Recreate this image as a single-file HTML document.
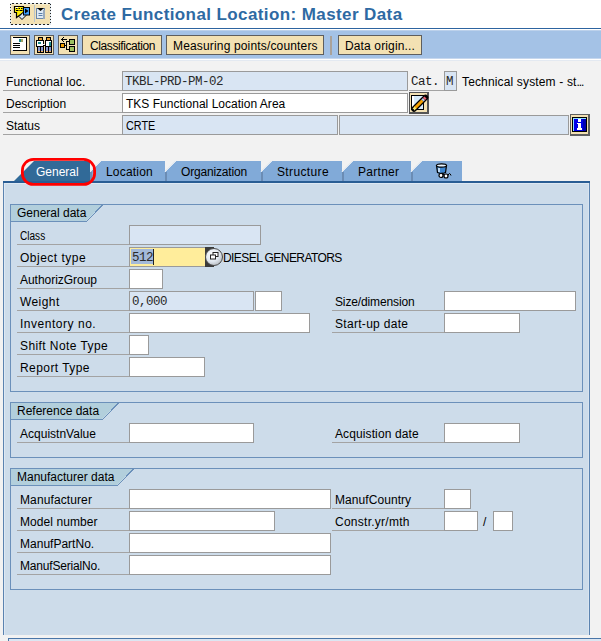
<!DOCTYPE html>
<html><head><meta charset="utf-8">
<style>
*{margin:0;padding:0;box-sizing:border-box}
html,body{width:601px;height:641px;overflow:hidden;background:#f2f2f2;font-family:"Liberation Sans",sans-serif;font-size:12px;color:#000}
.a{position:absolute}
.btn{position:absolute;top:35px;height:20px;background:#f3e1b3;border:1px solid #5e5e5e;white-space:nowrap;line-height:21px;padding-left:6px}
.ibtn{position:absolute;top:35px;width:21px;height:20px;background:#f3e1b3;border:1px solid #5e5e5e}
.lbl{position:absolute;height:20px;border-bottom:1px solid #a3a3a3;white-space:nowrap;line-height:22px;padding-left:3px}
.fld{position:absolute;height:20px;border:1px solid #9a9a9a;background:#fff;white-space:nowrap;line-height:20px;padding-left:3px;overflow:hidden}
.ro{background:#d9e5f3}
.mono{font-family:"Liberation Mono",monospace;font-size:12.5px;letter-spacing:-0.5px;color:#2a2a2a}
.txt{position:absolute;white-space:nowrap;line-height:22px;height:20px}
</style></head><body>
<div class="a" style="left:0px;top:0px;width:601px;height:28px;background:#fff;"></div>
<svg class="a" style="left:10px;top:3px" width="41" height="22" viewBox="0 0 41 22">
 <rect x="0" y="0" width="41" height="22" fill="#dde8f0"/>
 <rect x="1" y="1" width="39" height="20" fill="#f3e1b3"/>
 <rect x="1" y="1" width="39" height="1" fill="#f8ecc8"/><rect x="1" y="1" width="1" height="20" fill="#f8ecc8"/>
 <path d="M2 0.5H41" stroke="#222" stroke-dasharray="2 2" shape-rendering="crispEdges"/>
 <path d="M1 21.5H41" stroke="#222" stroke-dasharray="2 2" shape-rendering="crispEdges"/>
 <path d="M0.5 1V22" stroke="#222" stroke-dasharray="1 2" shape-rendering="crispEdges"/>
 <path d="M40.5 1V22" stroke="#222" stroke-dasharray="1 2" shape-rendering="crispEdges"/>
 <g shape-rendering="crispEdges">
 <rect x="24" y="2" width="1" height="17" fill="#b8c4cf"/>
 </g>
 <path d="M4.5 3.5 H13.5 V9.5 L6.5 14.5 V9.5 H4.5 Z" fill="#ffee00" stroke="#000" stroke-width="1.2"/>
 <path d="M5.5 4.5 H8" stroke="#fff" stroke-width="1"/>
 <path d="M6 5.5 H7.5 M8.5 5.5 H10 M11 5.5 H12.5 M6 7.5 H8.5 M9.5 7.5 H12.5" stroke="#000" stroke-width="1.1"/>
 <path d="M9 13.5 L13 9.5 L16 12.5 L12 16.5 Z" fill="#d8e8f8" stroke="#000" stroke-width="1"/>
 <rect x="13.5" y="4.5" width="6" height="7.5" fill="#40a0ff" stroke="#000" stroke-width="1"/>
 <path d="M15 5.5 L18.5 8 L15 10.5 Z" fill="#000"/>
 <rect x="26.5" y="5.5" width="8" height="10" fill="#dfeaf5" stroke="#6d88a8"/>
 <path d="M27 5 H34 L30.5 8 Z" fill="#000"/>
 <path d="M28.5 10.5 H32.5 M28.5 12.5 H32.5" stroke="#5c80aa"/>
 <rect x="33" y="7" width="2" height="9" fill="#9aaabb"/>
</svg>
<div class="a" style="left:61px;top:5px;font-weight:bold;font-size:17px;color:#2e6aa3;white-space:nowrap;letter-spacing:0.4px">Create Functional Location: Master Data</div>
<div class="a" style="left:0px;top:28px;width:601px;height:1px;background:#2d64a0;"></div>
<div class="a" style="left:0px;top:29px;width:601px;height:1px;background:#fff;"></div>
<div class="a" style="left:0px;top:30px;width:601px;height:28px;background:#a4c2e6;"></div>
<div class="a" style="left:0px;top:30px;width:601px;height:1px;background:#bcd1eb;"></div>
<div class="a" style="left:0px;top:58px;width:601px;height:1px;background:#c6d7ee;"></div>
<div class="a" style="left:0px;top:59px;width:601px;height:1px;background:#fff;"></div>
<div class="a" style="left:0px;top:60px;width:601px;height:1px;background:#e3e9f1;"></div>
<div class="ibtn" style="left:10px;width:20px"></div>
<div class="ibtn" style="left:34px;width:20px"></div>
<div class="ibtn" style="left:58px;width:20px"></div>
<svg class="a" style="left:10px;top:35px" width="20" height="20" viewBox="0 0 20 20" shape-rendering="crispEdges">
 <rect x="2" y="2" width="15" height="14" fill="#fff"/>
 <rect x="2" y="15" width="15" height="1" fill="#c8cfee"/>
 <rect x="3" y="2" width="14" height="1" fill="#000"/>
 <rect x="16" y="2" width="1" height="14" fill="#000"/>
 <rect x="3" y="15" width="14" height="1" fill="#000"/>
 <rect x="9" y="4" width="2" height="3" fill="#1a8a8a"/>
 <rect x="11" y="4" width="2" height="3" fill="#a0a060"/>
 <rect x="3" y="8" width="7" height="1" fill="#000"/>
 <rect x="3" y="10" width="7" height="1" fill="#000"/>
 <rect x="3" y="12" width="7" height="1" fill="#000"/>
</svg>
<svg class="a" style="left:34px;top:35px" width="20" height="20" viewBox="0 0 20 20">
 <g shape-rendering="crispEdges">
 <rect x="4" y="2" width="5" height="4" fill="#000"/><rect x="5" y="3" width="3" height="3" fill="#e8a030"/>
 <rect x="2" y="5" width="8" height="7" fill="#000"/><rect x="3" y="6" width="6" height="5" fill="#fff"/><rect x="4" y="7" width="3" height="2" fill="#1a8a8a"/>
 <rect x="9" y="9" width="3" height="1" fill="#fff"/><rect x="9" y="10" width="2" height="1" fill="#000"/>
 <rect x="3" y="11" width="7" height="7" fill="#000"/><rect x="4" y="12" width="2" height="5" fill="#8a98d0"/><rect x="7" y="12" width="2" height="5" fill="#8a98d0"/>
 <rect x="4" y="16" width="2" height="1" fill="#f0b060"/><rect x="7" y="16" width="2" height="1" fill="#f0b060"/>

 <rect x="12" y="2" width="5" height="4" fill="#000"/><rect x="13" y="3" width="3" height="3" fill="#e8a030"/>
 <rect x="11" y="5" width="7" height="7" fill="#000"/><rect x="12" y="6" width="5" height="5" fill="#fff"/><rect x="15" y="7" width="2" height="4" fill="#1a8a8a"/>
 <rect x="11" y="11" width="7" height="7" fill="#000"/><rect x="12" y="12" width="2" height="5" fill="#8a98d0"/><rect x="15" y="12" width="2" height="5" fill="#8a98d0"/>
 <rect x="12" y="16" width="2" height="1" fill="#f0b060"/><rect x="15" y="16" width="2" height="1" fill="#f0b060"/>
 </g>
</svg>
<svg class="a" style="left:58px;top:35px" width="20" height="20" viewBox="0 0 20 20" shape-rendering="crispEdges">
 <rect x="3" y="4" width="6" height="1" fill="#000"/>
 <rect x="4" y="3" width="1" height="1" fill="#000"/><rect x="4" y="5" width="1" height="1" fill="#000"/><rect x="5" y="2" width="1" height="1" fill="#000"/><rect x="5" y="6" width="1" height="1" fill="#000"/>
 <rect x="2" y="8" width="5" height="5" fill="#000"/><rect x="3" y="9" width="3" height="3" fill="#f5a000"/>
 <rect x="7" y="10" width="2" height="1" fill="#000"/>
 <rect x="8" y="6" width="1" height="9" fill="#000"/>
 <rect x="8" y="6" width="3" height="1" fill="#000"/><rect x="8" y="14" width="3" height="1" fill="#000"/>
 <rect x="11" y="4" width="6" height="6" fill="#000"/><rect x="12" y="5" width="4" height="4" fill="#9cc060"/>
 <rect x="11" y="11" width="6" height="6" fill="#000"/><rect x="12" y="12" width="4" height="4" fill="#9cc060"/>
</svg>
<div class="btn" style="left:82px;width:80px;padding-left:7px"><span style="letter-spacing:-0.406px">Classification</span></div>
<div class="btn" style="left:166px;width:158px"><span style="letter-spacing:0.159px">Measuring points/counters</span></div>
<div class="a" style="left:330px;top:36px;width:2px;height:19px;background:#aaa29a;"></div>
<div class="btn" style="left:338px;width:84px"><span style="letter-spacing:0.135px">Data origin...</span></div>
<div class="lbl" style="left:3px;top:71px;width:119px;"><span style="letter-spacing:0.133px">Functional loc.</span></div>
<div class="fld ro mono" style="left:122px;top:71px;width:286px;padding-left:2px">TKBL-PRD-PM-02</div>
<div class="lbl" style="left:409px;top:71px;width:35px;font-family:Liberation Mono;font-size:12.5px;letter-spacing:-0.5px;padding-left:2px;color:#1a1a1a">Cat.</div>
<div class="fld ro mono" style="left:444px;top:71px;width:13px;padding-left:1px">M</div>
<div class="txt" style="left:462px;top:71px;letter-spacing:0.15px">Technical system - st<span style="letter-spacing:-1.1px">...</span></div>
<div class="lbl" style="left:3px;top:93px;width:119px;"><span style="letter-spacing:0.01px">Description</span></div>
<div class="fld " style="left:122px;top:93px;width:286px;"><span style="letter-spacing:0.018px">TKS Functional Location Area</span></div>
<div class="a" style="left:409px;top:92px;width:20px;height:22px;background:#f3e1b3;border:1px solid #555;border-right-width:2px;border-bottom-width:2px"></div>
<svg class="a" style="left:409px;top:92px" width="20" height="22" viewBox="0 0 20 22">
 <g shape-rendering="crispEdges"><rect x="2" y="3" width="13" height="15" fill="#000"/><rect x="3" y="4" width="11" height="13" fill="#d6eaf8"/><rect x="3" y="4" width="2" height="13" fill="#fff"/></g>
 <path d="M5 17 L16.5 5.5" stroke="#000" stroke-width="5.5" stroke-linecap="round"/>
 <path d="M6 16 L13.5 8.5" stroke="#f5a000" stroke-width="3"/>
 <path d="M13.5 8.5 L15 7" stroke="#b8c8e8" stroke-width="3"/>
 <path d="M15 7 L16.5 5.5" stroke="#e86070" stroke-width="3"/>
 <path d="M4.5 17.5 L6.5 15.5" stroke="#f8e870" stroke-width="2.5"/>
 <path d="M3.8 18.2 L4.6 17.4" stroke="#000" stroke-width="1.5"/>
</svg>
<div class="lbl" style="left:3px;top:115px;width:119px;"><span style="letter-spacing:-0.02px">Status</span></div>
<div class="fld ro" style="left:122px;top:115px;width:216px;"><span style="display:inline-block;transform:scaleX(0.9);transform-origin:0 0">CRTE</span></div>
<div class="fld ro" style="left:339px;top:115px;width:230px;"></div>
<div class="a" style="left:570px;top:114px;width:20px;height:22px;background:#f3e1b3;border:1px solid #606060;border-right-width:2px;border-bottom-width:2px"></div>
<svg class="a" style="left:570px;top:114px" width="20" height="22" viewBox="0 0 20 22" shape-rendering="crispEdges">
 <rect x="2" y="3" width="15" height="15" fill="#000"/><rect x="3" y="4" width="13" height="13" fill="#0000e8"/>
 <rect x="3" y="4" width="13" height="1" fill="#90e0ff"/><rect x="3" y="4" width="1" height="13" fill="#90e0ff"/>
 <rect x="13" y="5" width="3" height="12" fill="#0000b0"/>
 <rect x="8" y="5" width="3" height="3" fill="#fff"/>
 <rect x="7" y="9" width="4" height="1" fill="#fff"/><rect x="8" y="9" width="3" height="6" fill="#fff"/><rect x="7" y="14" width="5" height="2" fill="#fff"/>
</svg>
<div class="a" style="left:3px;top:181px;width:587px;height:454px;background:#cddcea;border-left:1px solid #5b83b0;border-right:1px solid #5b83b0;border-top:2px solid #295d94"></div>
<div class="a" style="left:4px;top:183px;width:1px;height:452px;background:#dde8f3;"></div>
<div class="a" style="left:588px;top:183px;width:1px;height:452px;background:#d8e4f0;"></div>
<svg class="a" style="left:0;top:155px" width="601" height="34" viewBox="0 155 601 34">
<polygon points="401.5,181 421.5,161 462,161 462,181" fill="#81aad8"/>
<polygon points="332.5,181 352.5,161 411,161 411,181" fill="#81aad8"/>
<polygon points="251.5,181 271.5,161 342,161 342,181" fill="#81aad8"/>
<polygon points="155.5,181 175.5,161 261,161 261,181" fill="#81aad8"/>
<polygon points="80.5,181 100.5,161 165,161 165,181" fill="#81aad8"/>
<path d="M89.8,172 L100.8,161" stroke="#f8f8f8" stroke-width="1"/>
<rect x="90" y="172" width="2" height="9" fill="#6b8cb4"/>
<path d="M164.8,172 L175.8,161" stroke="#f8f8f8" stroke-width="1"/>
<rect x="165" y="172" width="2" height="9" fill="#6b8cb4"/>
<path d="M260.8,172 L271.8,161" stroke="#f8f8f8" stroke-width="1"/>
<rect x="261" y="172" width="2" height="9" fill="#6b8cb4"/>
<path d="M341.8,172 L352.8,161" stroke="#f8f8f8" stroke-width="1"/>
<rect x="342" y="172" width="2" height="9" fill="#6b8cb4"/>
<path d="M410.8,172 L421.8,161" stroke="#f8f8f8" stroke-width="1"/>
<rect x="411" y="172" width="2" height="9" fill="#6b8cb4"/>
<polygon points="14,181 34,161 90,161 90,181" fill="#316a98"/>
<rect x="3" y="181" width="587" height="2" fill="#295d94"/>
<rect x="4" y="183" width="585" height="1" fill="#dde8f3"/>
<rect x="22.4" y="159.4" width="72.2" height="25" rx="11" ry="11" fill="none" stroke="#ff0000" stroke-width="2.8"/>
</svg>
<div class="txt" style="left:36px;top:161px;color:#fff">General</div>
<div class="txt" style="left:106px;top:161px;"><span style="letter-spacing:0.186px">Location</span></div>
<div class="txt" style="left:181px;top:161px;"><span style="letter-spacing:-0.177px">Organization</span></div>
<div class="txt" style="left:277px;top:161px;"><span style="letter-spacing:0.362px">Structure</span></div>
<div class="txt" style="left:358px;top:161px;"><span style="letter-spacing:0.284px">Partner</span></div>
<svg class="a" style="left:435px;top:163px" width="18" height="16" viewBox="0 0 18 16">
 <path d="M1.5 2.5 L2.5 9.5 Q6.5 11.5 10.5 9.5 L11.5 2.5 Z" fill="#3d86d0" stroke="#000" stroke-width="1.2"/>
 <ellipse cx="6.5" cy="2.5" rx="5" ry="1.6" fill="#e8f4ff" stroke="#000" stroke-width="1.2"/>
 <path d="M4 5 V9" stroke="#e8f4ff" stroke-width="1.5"/>
 <path d="M7 9.5 L9 12" stroke="#000" stroke-width="1"/>
 <circle cx="6" cy="12.5" r="2" fill="#fff" stroke="#000" stroke-width="1.2"/>
 <circle cx="11" cy="13" r="2" fill="#fff" stroke="#000" stroke-width="1.2"/>
 <path d="M13 12.5 Q14.5 8.5 16 12.5" fill="none" stroke="#000" stroke-width="1"/>
</svg>
<div class="a" style="left:10px;top:204px;width:573px;height:188px;border:1px solid #6b90ba"></div>
<svg class="a" style="left:10px;top:204px" width="95" height="18" viewBox="0 0 95 18"><polygon points="1,1 92,1 76,17 1,17" fill="#b2cfdc"/><path d="M1,17.5 H76.5 L92.5,1" fill="none" stroke="#6b90ba" stroke-width="1" shape-rendering="crispEdges"/></svg>
<div class="txt" style="left:17px;top:204px;line-height:18px">General data</div>
<div class="a" style="left:10px;top:402px;width:573px;height:56px;border:1px solid #6b90ba"></div>
<svg class="a" style="left:10px;top:402px" width="111" height="18" viewBox="0 0 111 18"><polygon points="1,1 108,1 92,17 1,17" fill="#b2cfdc"/><path d="M1,17.5 H92.5 L108.5,1" fill="none" stroke="#6b90ba" stroke-width="1" shape-rendering="crispEdges"/></svg>
<div class="txt" style="left:17px;top:402px;line-height:18px">Reference data</div>
<div class="a" style="left:10px;top:468px;width:573px;height:122px;border:1px solid #6b90ba"></div>
<svg class="a" style="left:10px;top:468px" width="126" height="18" viewBox="0 0 126 18"><polygon points="1,1 123,1 107,17 1,17" fill="#b2cfdc"/><path d="M1,17.5 H107.5 L123.5,1" fill="none" stroke="#6b90ba" stroke-width="1" shape-rendering="crispEdges"/></svg>
<div class="txt" style="left:17px;top:468px;line-height:18px">Manufacturer data</div>
<div class="lbl" style="left:17px;top:225px;width:112px;"><span style="display:inline-block;transform:scaleX(0.84);transform-origin:0 0">Class</span></div>
<div class="lbl" style="left:17px;top:247px;width:112px;"><span style="letter-spacing:0.5px">Object type</span></div>
<div class="lbl" style="left:17px;top:269px;width:112px;"><span style="letter-spacing:-0.028px">AuthorizGroup</span></div>
<div class="lbl" style="left:17px;top:291px;width:112px;"><span style="letter-spacing:0.42px">Weight</span></div>
<div class="lbl" style="left:17px;top:313px;width:112px;"><span style="letter-spacing:0.525px">Inventory no.</span></div>
<div class="lbl" style="left:17px;top:335px;width:112px;"><span style="letter-spacing:0.42px">Shift Note Type</span></div>
<div class="lbl" style="left:17px;top:357px;width:112px;"><span style="letter-spacing:0.43px">Report Type</span></div>
<div class="fld ro" style="left:129px;top:225px;width:132px;"></div>
<div class="fld " style="left:129px;top:247px;width:77px;background:#ffed9b"></div>
<div class="a" style="left:131px;top:249px;width:22px;height:15px;background:#a3b9d9;"></div>
<div class="a" style="left:153px;top:249px;width:1px;height:16px;background:#222;"></div>
<div class="txt" style="left:132px;top:247px;font-family:Liberation Mono;font-size:12.5px;letter-spacing:-0.5px;color:#2a2a2a">512</div>
<div class="a" style="left:205px;top:247px;width:9px;height:20px;background:#3b3b3b"></div>
<svg class="a" style="left:204px;top:246px" width="20" height="22" viewBox="0 0 20 22">
 <defs><radialGradient id="rg" cx="40%" cy="35%" r="70%"><stop offset="0" stop-color="#ffffff"/><stop offset="0.6" stop-color="#dfe6ee"/><stop offset="1" stop-color="#b4b8bd"/></radialGradient></defs>
 <circle cx="10" cy="11" r="8.5" fill="url(#rg)" stroke="#4a4a4a" stroke-width="1"/>
 <rect x="9" y="6.5" width="5" height="4" fill="#fff" stroke="#222"/>
 <rect x="6.5" y="9" width="5" height="4" fill="#fff" stroke="#222"/>
</svg>
<div class="txt" style="left:223px;top:247px;"><span style="letter-spacing:-0.569px">DIESEL GENERATORS</span></div>
<div class="fld " style="left:129px;top:269px;width:34px;"></div>
<div class="fld ro mono" style="left:129px;top:291px;width:125px;padding-left:2px">0,000</div>
<div class="fld " style="left:255px;top:291px;width:27px;"></div>
<div class="fld " style="left:129px;top:313px;width:181px;"></div>
<div class="fld " style="left:129px;top:335px;width:20px;"></div>
<div class="fld " style="left:129px;top:357px;width:76px;"></div>
<div class="lbl" style="left:332px;top:291px;width:112px;"><span style="letter-spacing:-0.131px">Size/dimension</span></div>
<div class="fld " style="left:444px;top:291px;width:132px;"></div>
<div class="lbl" style="left:332px;top:313px;width:112px;"><span style="letter-spacing:0.298px">Start-up date</span></div>
<div class="fld " style="left:444px;top:313px;width:76px;"></div>
<div class="lbl" style="left:17px;top:423px;width:112px;"><span style="letter-spacing:0.012px">AcquistnValue</span></div>
<div class="fld " style="left:129px;top:423px;width:125px;"></div>
<div class="lbl" style="left:332px;top:423px;width:112px;"><span style="letter-spacing:0.11px">Acquistion date</span></div>
<div class="fld " style="left:444px;top:423px;width:76px;"></div>
<div class="lbl" style="left:17px;top:489px;width:112px;"><span style="letter-spacing:0.107px">Manufacturer</span></div>
<div class="lbl" style="left:17px;top:511px;width:112px;"><span style="letter-spacing:0.067px">Model number</span></div>
<div class="lbl" style="left:17px;top:533px;width:112px;"><span style="letter-spacing:0.012px">ManufPartNo.</span></div>
<div class="lbl" style="left:17px;top:555px;width:112px;"><span style="letter-spacing:-0.191px">ManufSerialNo.</span></div>
<div class="fld " style="left:129px;top:489px;width:202px;"></div>
<div class="fld " style="left:129px;top:511px;width:146px;"></div>
<div class="fld " style="left:129px;top:533px;width:202px;"></div>
<div class="fld " style="left:129px;top:555px;width:202px;"></div>
<div class="lbl" style="left:332px;top:489px;width:112px;"><span style="letter-spacing:0.068px">ManufCountry</span></div>
<div class="fld " style="left:444px;top:489px;width:27px;"></div>
<div class="lbl" style="left:332px;top:511px;width:112px;"><span style="letter-spacing:0.262px">Constr.yr/mth</span></div>
<div class="fld " style="left:444px;top:511px;width:34px;"></div>
<div class="txt" style="left:483px;top:511px;">/</div>
<div class="fld " style="left:493px;top:511px;width:20px;"></div>
<div class="a" style="left:8px;top:638px;width:593px;height:3px;background:#dce6f2;border-top:1px solid #4a76a8;border-left:1px solid #4a76a8"></div>
</body></html>
